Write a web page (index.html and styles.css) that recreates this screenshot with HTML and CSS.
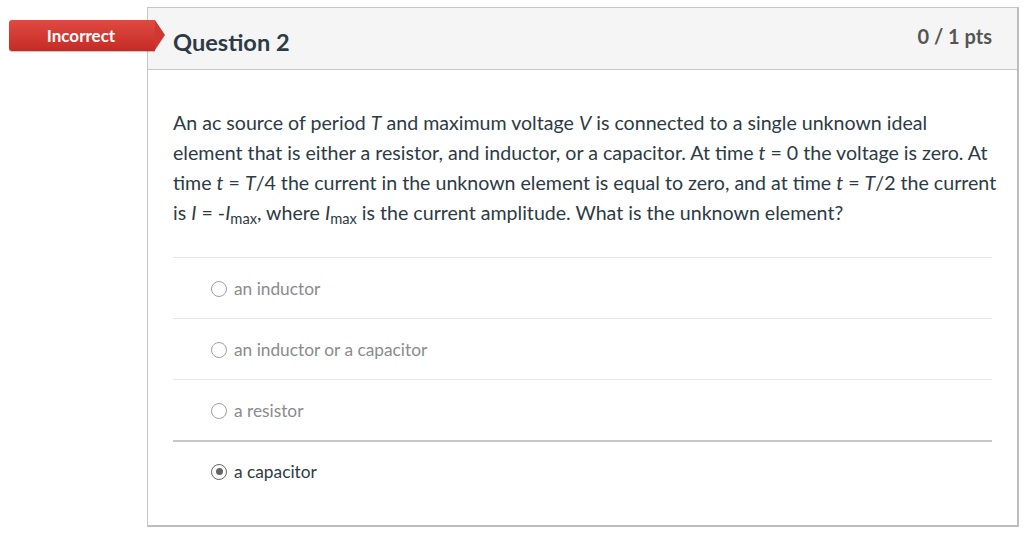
FILE: index.html
```html
<!DOCTYPE html>
<html>
<head>
<meta charset="utf-8">
<link rel="stylesheet" href="styles.css">
</head>
<body>
<div class="page">
  <div class="badge"><span>Incorrect</span></div>
  <div class="card">
    <div class="card-header">
      <div class="title">Question 2</div>
      <div class="pts">0 / 1 pts</div>
    </div>
    <div class="card-body">
      <p class="question">An ac source of period <i>T</i> and maximum voltage <i>V</i> is connected to a single unknown ideal element that is either a resistor, and inductor, or a capacitor. At time <i>t</i> = 0 the voltage is zero. At time <i>t</i> = <i>T</i>/4 the current in the unknown element is equal to zero, and at time <i>t</i> = <i>T</i>/2 the current is <i>I</i> = -<i>I</i><sub>max</sub>, where <i>I</i><sub>max</sub> is the current amplitude. What is the unknown element?</p>
      <div class="answers">
        <div class="answer"><span class="radio"></span><span class="label">an inductor</span></div>
        <div class="answer"><span class="radio"></span><span class="label">an inductor or a capacitor</span></div>
        <div class="answer"><span class="radio"></span><span class="label">a resistor</span></div>
        <div class="answer selected"><span class="radio checked"></span><span class="label">a capacitor</span></div>
      </div>
    </div>
  </div>
</div>
</body>
</html>
```
FILE: styles.css
```css
html, body {
  margin: 0;
  padding: 0;
  background: #fff;
  font-family: Lato, "Open Sans", sans-serif;
  color: #2d3b45;
}
.page {
  position: relative;
  padding: 7px 0 0 147px;
  width: 872px;
}
.badge {
  position: absolute;
  left: 9px;
  top: 20px;
  width: 146px;
  height: 31px;
  background: linear-gradient(#e04a42, #c42b25);
  border-radius: 3px 0 0 3px;
  color: #fff;
  font-weight: 700;
  font-size: 17px;
  display: flex;
  align-items: center;
  justify-content: center;
  box-shadow: 0 1px 1px rgba(0,0,0,0.25);
  z-index: 2;
}
.badge::after {
  content: "";
  position: absolute;
  right: -10px;
  top: 0;
  border-top: 15.5px solid transparent;
  border-bottom: 15.5px solid transparent;
  border-left: 10px solid #d1362f;
}
.badge span {
  margin-right: 2px;
  margin-top: -1px;
}
.card {
  border: 1px solid #c7c7c7;
  border-right-width: 2px;
  border-bottom-width: 2px;
  border-right-color: #bdbdbd;
  border-bottom-color: #bdbdbd;
  background: #fff;
}
.card-header {
  background: #f5f5f5;
  border-bottom: 1px solid #c7c7c7;
  height: 61px;
  display: flex;
  justify-content: space-between;
  padding: 0 25px 0 25px;
}
.title {
  font-size: 23.6px;
  font-weight: 700;
  margin-top: 20px;
  line-height: 28px;
  color: #2d3b45;
}
.pts {
  font-size: 20px;
  font-weight: 700;
  color: #555;
  margin-top: 14px;
  line-height: 28px;
}
.card-body {
  padding: 38px 25px 24px 25px;
}
.question {
  margin: 0 -7px 29px 0;
  font-size: 19.6px;
  line-height: 30px;
}
.question sub {
  font-size: 75%;
  line-height: 0;
  vertical-align: -0.3em;
}
.answers {
  display: flex;
  flex-direction: column;
}
.answer {
  border-top: 1px solid #e6e6e6;
  display: flex;
  align-items: center;
  padding-left: 38px;
  padding-top: 2px;
  font-size: 17.3px;
  color: #8b8b8b;
  box-sizing: border-box;
  height: 61px;
}
.answer.selected {
  border-top: 2px solid #c7c7c7;
  color: #2d3b45;
  padding-top: 0;
}
.radio {
  width: 14px;
  height: 14px;
  border: 1.5px solid #a0a0a0;
  border-radius: 50%;
  background: #fff;
  margin-right: 7px;
  position: relative;
  flex: none;
}
.radio.checked {
  border-color: #666;
}
.radio.checked::after {
  content: "";
  position: absolute;
  left: 3.5px;
  top: 3.5px;
  width: 7px;
  height: 7px;
  border-radius: 50%;
  background: #666;
}
.label {
  line-height: 20px;
}
```
